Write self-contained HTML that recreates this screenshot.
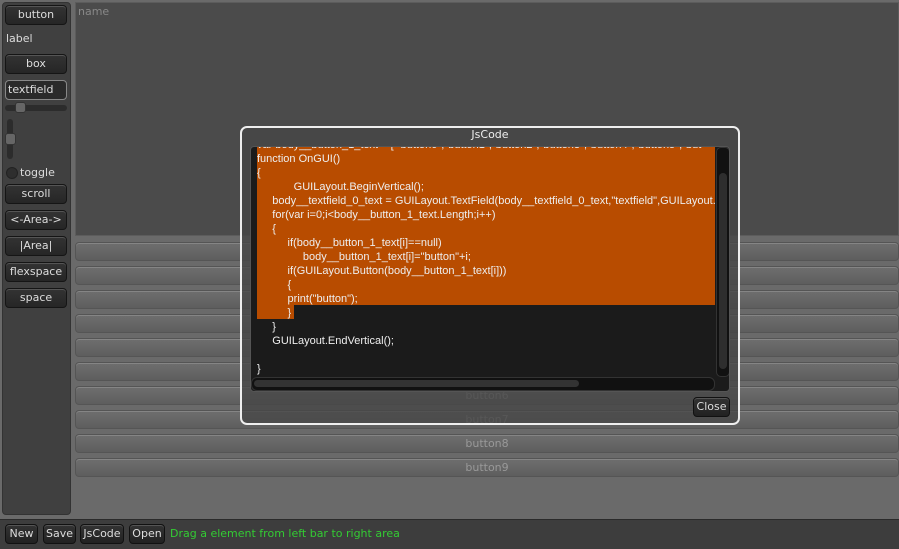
<!DOCTYPE html>
<html><head><style>
*{margin:0;padding:0;box-sizing:border-box}
body{width:899px;height:549px;background:#6a6a6a;position:relative;overflow:hidden;font-family:"DejaVu Sans","Liberation Sans",sans-serif;font-size:11px;color:#ddd}
.abs{position:absolute}
.btn{position:absolute;left:5px;width:62px;height:20px;border-radius:4px;background:linear-gradient(#333,#262626);border:1px solid #151515;box-shadow:inset 0 1px 0 #555;color:#ddd;text-align:center;line-height:18px;font-size:11px}
.row{position:absolute;left:75px;right:0;height:19px;border-radius:4px;background:linear-gradient(#6e6e6e,#5e5e5e);border:1px solid #555;box-shadow:inset 0 1px 0 #858585;text-align:center;line-height:17px;color:#999;font-size:11px}
.bb{position:absolute;top:524px;height:20px;border-radius:4px;background:linear-gradient(#333,#222);border:1px solid #111;box-shadow:inset 0 1px 0 #555;color:#ddd;text-align:center;line-height:18px;font-size:11px}
.code div{height:14px;line-height:14px;white-space:pre;font-family:"Liberation Sans",sans-serif;font-size:11px;color:#eee}
</style></head><body>
<div class="abs" style="left:2px;top:2px;width:69px;height:513px;background:#404040;border-radius:4px;border:1px solid #333"></div>
<div class="abs" style="left:75px;top:2px;width:824px;height:234px;background:#4b4b4b;border:1px solid #5c5c5c"></div>
<div class="abs" style="left:78px;top:5px;color:#888;font-size:11px">name</div>
<div class="btn" style="top:5px">button</div>
<div class="abs" style="left:6px;top:32px;font-size:11px">label</div>
<div class="btn" style="top:54px">box</div>
<div class="btn" style="top:80px;text-align:left;padding-left:2px;background:#2a2a2a;border-color:#888;box-shadow:none">textfield</div>
<div class="abs" style="left:5px;top:105px;width:62px;height:6px;border-radius:3px;background:#2c2c2c"></div>
<div class="abs" style="left:15px;top:102px;width:11px;height:11px;border-radius:3px;background:#666;border:1px solid #333"></div>
<div class="abs" style="left:7px;top:119px;width:6px;height:40px;border-radius:3px;background:#2c2c2c"></div>
<div class="abs" style="left:5px;top:133px;width:11px;height:12px;border-radius:3px;background:#666;border:1px solid #333"></div>
<div class="abs" style="left:6px;top:167px;width:12px;height:12px;border-radius:6px;background:#2e2e2e;border:1px solid #222"></div>
<div class="abs" style="left:20px;top:166px;font-size:11px">toggle</div>
<div class="btn" style="top:184px">scroll</div>
<div class="btn" style="top:210px">&lt;-Area-&gt;</div>
<div class="btn" style="top:236px">|Area|</div>
<div class="btn" style="top:262px">flexspace</div>
<div class="btn" style="top:288px">space</div>
<div class="row" style="top:242px">button0</div>
<div class="row" style="top:266px">button1</div>
<div class="row" style="top:290px">button2</div>
<div class="row" style="top:314px">button3</div>
<div class="row" style="top:338px">button4</div>
<div class="row" style="top:362px">button5</div>
<div class="row" style="top:386px">button6</div>
<div class="row" style="top:410px">button7</div>
<div class="row" style="top:434px">button8</div>
<div class="row" style="top:458px">button9</div>
<div class="abs" style="left:0;top:519px;width:899px;height:30px;background:#3d3d3d;border-top:1px solid #2a2a2a"></div>
<div class="bb" style="left:5px;width:33px">New</div>
<div class="bb" style="left:43px;width:33px">Save</div>
<div class="bb" style="left:80px;width:44px">JsCode</div>
<div class="bb" style="left:129px;width:36px">Open</div>
<div class="abs" style="left:170px;top:527px;color:#3c3;font-size:11px">Drag a element from left bar to right area</div>

<div class="abs" style="left:240px;top:126px;width:500px;height:299px;border:2px solid #eee;border-radius:7px;background:rgba(70,70,70,0.8)"></div>
<div class="abs" style="left:240px;top:128px;width:500px;text-align:center;font-size:11px;color:#eee">JsCode</div>
<div class="abs" style="left:250px;top:146px;width:480px;height:246px;background:#1b1b1b;border:1px solid #555;border-radius:4px;overflow:hidden">
 <div class="abs" style="left:6px;top:0;width:458px;height:158px;background:#b84c00"></div>
 <div class="abs" style="left:6px;top:158px;width:37px;height:14px;background:#b84c00"></div>
 <div class="code abs" style="left:6px;top:-9px;width:458px;overflow:hidden">
<div>var body__button_1_text = [ "button0","button1","button2","button3","button4","button5","but</div>
<div>function OnGUI()</div>
<div>{</div>
<div>            GUILayout.BeginVertical();</div>
<div>     body__textfield_0_text = GUILayout.TextField(body__textfield_0_text,"textfield",GUILayout.Wid</div>
<div>     for(var i=0;i&lt;body__button_1_text.Length;i++)</div>
<div>     {</div>
<div>          if(body__button_1_text[i]==null)</div>
<div>               body__button_1_text[i]="button"+i;</div>
<div>          if(GUILayout.Button(body__button_1_text[i]))</div>
<div>          {</div>
<div>          print("button");</div>
<div>          }</div>
<div>     }</div>
<div>     GUILayout.EndVertical();</div>
<div> </div>
<div>}</div>
 </div>
 <div class="abs" style="left:465px;top:0;width:14px;height:230px;background:#111;border-radius:5px;border:1px solid #333"></div>
 <div class="abs" style="left:468px;top:26px;width:8px;height:196px;background:#2e2e2e;border-radius:4px"></div>
 <div class="abs" style="left:0;top:230px;width:464px;height:14px;background:#111;border-radius:6px;border:1px solid #333"></div>
 <div class="abs" style="left:3px;top:233px;width:325px;height:7px;background:#333;border-radius:4px"></div>
</div>
<div class="bb" style="left:693px;top:397px;width:37px">Close</div>
</body></html>
